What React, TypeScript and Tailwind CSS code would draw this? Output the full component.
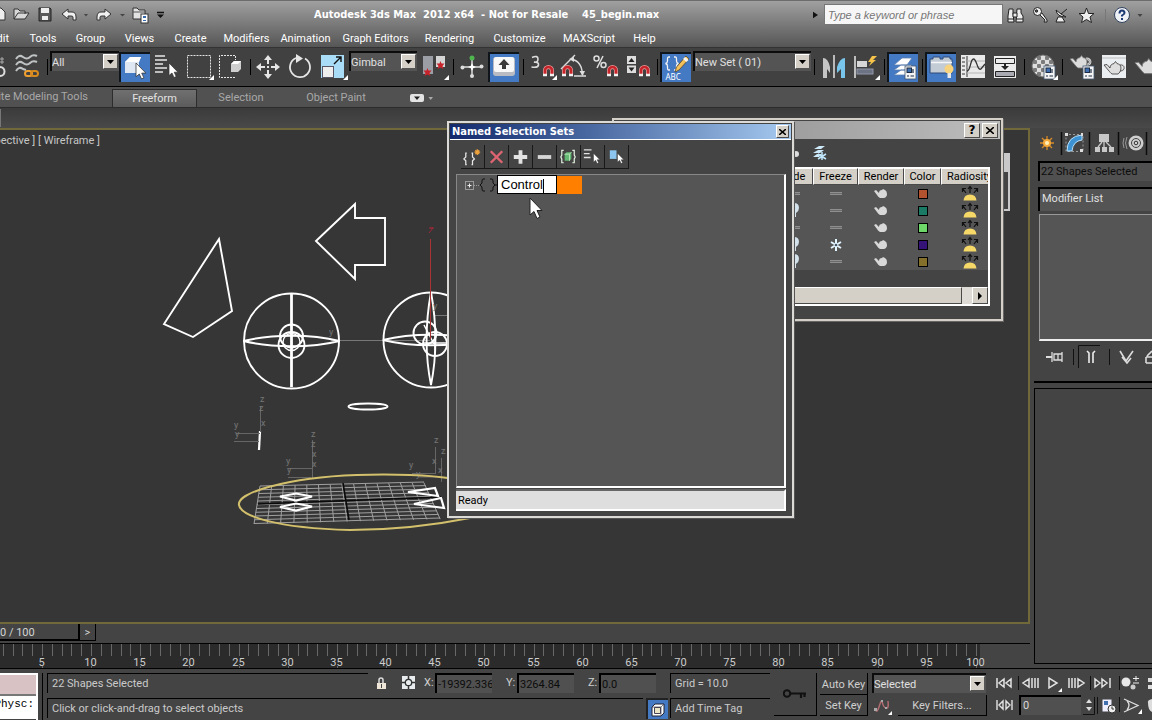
import type { ReactNode } from "react";

const W = "#e6e6e6";

function Icon({ children, className = "size-8" }: { children: ReactNode; className?: string }) {
  return (
    <svg viewBox="0 0 32 32" className={`block shrink-0 ${className}`} fill="none" aria-hidden="true">
      {children}
    </svg>
  );
}

function Tool({ label, active, children }: { label: string; active?: boolean; children: ReactNode }) {
  return (
    <button aria-label={label} className="size-8 shrink-0">
      <Icon>
        {active && (
          <>
            <rect x="0" y="1" width="31" height="30" fill="#10151c" />
            <rect x="2" y="3" width="29" height="28" fill="#4479c4" />
          </>
        )}
        {children}
      </Icon>
    </button>
  );
}

function Sep() {
  return (
    <span className="flex h-8 w-[6px] shrink-0 items-center justify-center">
      <span className="h-4 w-px bg-black" />
    </span>
  );
}

function Combo({ label, value, className }: { label: string; value: string; className: string }) {
  return (
    <div className={`flex h-5 shrink-0 border-t-2 border-l-2 border-[#0c0c0c] bg-[#545454] pt-px pr-px ${className}`}>
      <select aria-label={label} className="h-[17px] min-w-0 flex-1 appearance-none bg-transparent text-[11px] leading-[17px] text-[#e0e0e0] outline-none">
        <option>{value}</option>
      </select>
      <span className="pointer-events-none flex h-[15px] w-[15px] items-center justify-center border border-t-white border-r-[#555] border-b-[#555] border-l-white bg-[#d4d0c8]">
        <svg viewBox="0 0 7 4" className="h-1 w-[7px]">
          <path d="M0 0H7L3.5 4Z" fill="#000" />
        </svg>
      </span>
    </div>
  );
}

const Flyout = () => <path d="M31 24V29H26Z" fill="#fff" />;

const Magnet = ({ x = 0, y = 0 }: { x?: number; y?: number }) => (
  <g transform={`translate(${x} ${y})`}>
    <path d="M2 11V5.500A3.500 3.500 0 0 1 9 5.500V11" stroke="#e3a0a0" strokeWidth="4" />
    <path d="M2 9V5.500A3.500 3.500 0 0 1 9 5.500V9" stroke="#c8262b" strokeWidth="2.600" />
    <path d="M0 10H4M7 10H11" stroke="#f2f2f2" strokeWidth="2.500" />
  </g>
);

const Card = ({ x, y }: { x: number; y: number }) => (
  <g transform={`translate(${x} ${y})`}>
    <rect width="11" height="13" fill="#f4f4f4" stroke="#44576f" strokeWidth=".8" />
    <rect x="2" y="2" width="4.500" height="4.500" fill="#3f6fae" stroke="#1c2c45" />
    <path d="M8 3V7M2 10H4M5.500 10H9" stroke="#1c2c45" strokeWidth="1.200" />
  </g>
);

const Teapot = ({ x = 0, y = 0, s = 1, fill = "#dcdcdc", stroke = "#777" }: { x?: number; y?: number; s?: number; fill?: string; stroke?: string }) => (
  <g transform={`translate(${x} ${y}) scale(${s})`}>
    <path d="M16 4C21 3 22 10 16 10" stroke={fill} strokeWidth="2.600" />
    <path d="M16 4C21 3 22 10 16 10" stroke={stroke} strokeWidth=".7" />
    <path d="M0 4L3 3.500 6 7C6 4 8 3 10 2.600L11.500 .5 13 2.600C15 3 17 4 17 7C17 10 15 12.500 14 13H8C6.500 12 6 11 5 10Z" fill={fill} stroke={stroke} strokeWidth=".8" />
  </g>
);

const Pointer = ({ x, y, s = 1 }: { x: number; y: number; s?: number }) => (
  <path transform={`translate(${x} ${y}) scale(${s})`} d="M0 0V12.500L3 10 5 14.500 7.200 13.500 5.200 9.200H9Z" fill="#fff" stroke="#333" strokeWidth=".7" />
);

const menus = [
  ["Tools", "w-[46px]"],
  ["Group", "w-[49px]"],
  ["Views", "w-[49px]"],
  ["Create", "w-[53px]"],
  ["Modifiers", "w-[59px]"],
  ["Animation", "w-[59px]"],
  ["Graph Editors", "w-[81px]"],
  ["Rendering", "w-[67px]"],
  ["Customize", "w-[73px]"],
  ["MAXScript", "w-[66px]"],
  ["Help", "w-[45px]"],
];

function Header() {
  return (
    <header className="h-[47px] shrink-0 bg-linear-to-b from-[#a2a2a2] to-[#565656]">
      <div className="flex h-7 items-center border-t border-[#6c6c6c]">
        <svg viewBox="0 0 170 26" className="h-[26px] w-[170px] shrink-0" fill="none" aria-hidden="true">
          <path d="M-4 6H1L5 10V18H-4Z" fill="#eee" stroke="#333" />
          <path d="M14 17V7H18L20 9H25V12M14 17L18 11H29L25 17Z" fill="#d8d8d8" stroke="#333" />
          <path d="M39 6H50L51 7V19H39Z" fill="#5a5a5a" stroke="#222" />
          <rect x="41" y="6" width="8" height="5" fill="#eee" />
          <rect x="42" y="14" width="6" height="4" fill="#eee" />
          <path d="M62 12L68 7V10H72Q76 10 76 15V18H73V15Q73 14 71 14H68V17Z" fill="#f0f0f0" stroke="#333" />
          <path d="M84 12H88L86 14.500Z" fill="#444" />
          <path d="M111 12L105 7V10H101Q97 10 97 15V18H100V15Q100 14 102 14H105V17Z" fill="#f0f0f0" stroke="#333" />
          <path d="M120 12H125L122.500 14.500Z" fill="#444" />
          <path d="M133 6H137L139 8H145V17H133Z" fill="#e2e2e2" stroke="#333" />
          <path d="M133 10H145" stroke="#555" />
          <rect x="141" y="12" width="7" height="9" fill="#fff" stroke="#333" />
          <rect x="143" y="14" width="3" height="2" fill="#3769ad" />
          <path d="M143 18.500H146" stroke="#3769ad" />
          <path d="M157 10.500H164" stroke="#111" strokeWidth="1.500" />
          <path d="M157 12.500H164L160.500 16Z" fill="#111" />
        </svg>
        <h1 className="flex-1 pl-[144px] font-[DejaVu_Sans_Condensed,Noto_Sans,sans-serif] text-[11px] leading-4 font-bold whitespace-pre text-white">
          {"Autodesk 3ds Max  2012 x64  - Not for Resale    45_begin.max"}
        </h1>
        <svg viewBox="0 0 6 8" className="mr-[6px] h-2 w-[5px]" aria-hidden="true">
          <path d="M0 0V8L6 4Z" fill="#111" />
        </svg>
        <input
          aria-label="Search"
          placeholder="Type a keyword or phrase"
          className="h-[21px] w-[179px] border border-[#777] bg-[#f6f6f6] px-[3px] font-[Liberation_Sans,sans-serif] text-[11px] italic outline-none placeholder:text-[#777]"
        />
        <svg viewBox="0 0 149 26" className="h-[26px] w-[149px] shrink-0" fill="none" aria-hidden="true">
          <g fill="#eee" stroke="#222">
            <path d="M6 7H10V11L11 20H5V14ZM14 7H18V11L20 14V20H13Z" />
            <path d="M10 11H14V15H10Z" />
            <path d="M5 17H11M13 17H20" />
            <path d="M36 12L42 18 41 20 44 20 44 18 39 11Z" />
            <circle cx="34.500" cy="9.500" r="4" />
            <circle cx="33.500" cy="9" r="1.200" fill="#555" />
            <path d="M53 8Q54 15 63 15L58 12ZM58 12L64 7M55 15L53 20H62L59 15Z" />
            <path d="M83.500 6L85.500 11.500H91L87 15 88.500 20.500 83.500 17.500 78.500 20.500 80 15 76 11.500H81.500Z" />
          </g>
          <path d="M102.500 7V20" stroke="#777" />
          <circle cx="119" cy="13" r="7.500" fill="#eef1f6" stroke="#33445f" />
          <path d="M116.500 11.500Q116.500 8.500 119 8.500T121.500 11Q121.500 12 119 13.500V14.500" stroke="#1d3a75" strokeWidth="2" />
          <rect x="118" y="16" width="2" height="2" fill="#1d3a75" />
          <path d="M134.500 12H139.500L137 15Z" fill="#444" />
        </svg>
      </div>
      <nav className="flex h-5 items-center pt-px text-[11px] leading-4 text-white">
        <button className="flex w-5 justify-end pr-[11px]">Edit</button>
        {menus.map(([name, width]) => (
          <button key={name} className={`flex shrink-0 justify-center whitespace-nowrap ${width}`}>
            {name}
          </button>
        ))}
      </nav>
    </header>
  );
}

const checks: number[][] = [];
for (let r = 0; r < 5; r++) for (let c = 0; c < 5; c++) if ((r + c) % 2) checks.push([5 + c * 4, 4 + r * 4]);

function Toolbar() {
  return (
    <div role="toolbar" className="flex h-10 shrink-0 items-start overflow-hidden border-t border-b border-t-[#333] border-b-black bg-[#414141] pt-[3px]">
      <button aria-label="Unlink Selection" className="h-8 w-3 shrink-0">
        <svg viewBox="0 0 12 32" className="h-8 w-3" fill="none">
          <path d="M0 8H4M0 11H4M2 6V13" stroke="#aaa" />
          <path d="M0 16C6 16 6 25 0 25" stroke="#ddd" strokeWidth="2" />
        </svg>
      </button>
      <Tool label="Bind to Space Warp">
        <g stroke="#bfc3c4" strokeWidth="2">
          <path d="M4 8Q7 3 11 6T18 6T25 5" />
          <path d="M4 14Q7 9 11 12T18 12T25 11" />
          <path d="M4 20Q7 15 11 18L14 19" />
        </g>
        <rect x="13" y="20" width="7" height="5" rx="2.500" stroke="#f0a030" strokeWidth="2" />
        <rect x="19" y="20" width="7" height="5" rx="2.500" stroke="#d98b1e" strokeWidth="2" />
      </Tool>
      <Sep />
      <Combo label="Selection Filter" value="All" className="w-[69px]" />
      <Tool label="Select Object" active>
        <path d="M6 11L11 6H22L20 11V22H6Z" fill="#dfe8f2" />
        <path d="M6 11L11 6H22L20 11Z" fill="#fff" />
        <Pointer x={17} y={12} s={1.1} />
      </Tool>
      <Tool label="Select by Name">
        <path d="M4 5H14M4 9H16M4 13H12M4 17H16M4 21H12" stroke="#e6e6e6" strokeWidth="1.600" />
        <Pointer x={18} y={12} />
      </Tool>
      <Tool label="Rectangular Selection Region">
        <rect x="4.500" y="4.500" width="23" height="22" stroke={W} strokeDasharray="2 1" />
        <Flyout />
      </Tool>
      <Tool label="Window/Crossing">
        <path d="M20 26.500H4.500V4.500H20.500V9" stroke={W} strokeDasharray="2 1" />
        <path d="M16 13L19 10H26V18L23 21H16Z" fill="#cfcfcf" />
        <path d="M16 13L19 10H26L23 13Z" fill="#fff" />
      </Tool>
      <Sep />
      <Tool label="Select and Move">
        <path d="M15 4L19 9H11ZM15 28L19 23H11ZM3 16L8 12V20ZM27 16L22 12V20Z" fill={W} />
        <path d="M15 8V13M15 19V24M7 16H12M18 16H23M14 16H16" stroke={W} strokeWidth="2" />
      </Tool>
      <Tool label="Select and Rotate">
        <path d="M11 7A10 10 0 1 0 20 7.500" stroke={W} strokeWidth="1.800" />
        <path d="M11 3L18 7.500 11 12Z" fill={W} />
      </Tool>
      <Tool label="Select and Scale">
        <rect x="4" y="4" width="23" height="23" fill="#a9dcf6" />
        <rect x="5.500" y="15.500" width="11" height="11" fill="#eee" stroke="#556" />
        <path d="M17 13L24 6M19 6H24V11" stroke="#111" strokeWidth="1.400" />
        <Flyout />
      </Tool>
      <Combo label="Reference Coordinate System" value="Gimbal" className="mr-px w-[68px]" />
      <Tool label="Use Pivot Point Center">
        <path d="M5 5H15V23H5Z" fill="#9b9ea4" />
        <path d="M18 5H27V16H18Z" fill="#d5d5d5" />
        <path d="M9.500 17L10.500 19.500H13.500L11.500 22 12.500 25 9.500 23.500 6.500 25 7.500 22 5.500 19.500H8.500ZM22.500 10L23.500 12.500H26.500L24.500 15 25.500 18 22.500 16.500 19.500 18 20.500 15 18.500 12.500H21.500Z" fill="#c8232a" />
        <Flyout />
      </Tool>
      <Sep />
      <Tool label="Select and Manipulate">
        <path d="M16 8V25M7 16H25" stroke="#ddd" strokeWidth="1.500" />
        <path d="M16 12L17.200 14.800 20 16 17.200 17.200 16 20 14.800 17.200 12 16 14.800 14.800Z" fill="#fff" />
        <circle cx="16" cy="7" r="2.500" fill="#4fb54f" />
        <circle cx="16" cy="25" r="2" fill="#ddd" />
        <circle cx="6.500" cy="16.500" r="2" fill="#ddd" />
        <circle cx="25.500" cy="15.500" r="2" fill="#ddd" />
      </Tool>
      <Tool label="Keyboard Shortcut Override Toggle" active>
        <rect x="5" y="6" width="22" height="19" rx="3" fill="#b8bcc2" />
        <rect x="6" y="6" width="20" height="15" rx="2" fill="#f8f8f8" />
        <path d="M16 8L21.500 14H18V18H14V14H10.500Z" fill="#3a3a3a" />
      </Tool>
      <Sep />
      <Tool label="Snaps Toggle">
        <path d="M6 6.500Q12 4 12 8T8 11Q13 11 12.500 14T5.500 16" stroke="#ddd" strokeWidth="1.600" />
        <Magnet x={17} y={14} />
        <Flyout />
      </Tool>
      <Tool label="Angle Snap Toggle">
        <path d="M3 18L17 4M16 25H28M13 8Q24 10 24.500 24" stroke="#ddd" strokeWidth="1.400" />
        <path d="M11 8L16 6V11ZM21.500 20H27L24.500 25Z" fill="#ddd" />
        <Magnet x={4} y={14} />
      </Tool>
      <Tool label="Percent Snap Toggle">
        <circle cx="6.500" cy="7.500" r="2.500" stroke="#ddd" strokeWidth="1.500" />
        <circle cx="13.500" cy="14" r="2.500" stroke="#ddd" strokeWidth="1.500" />
        <path d="M13 5L7 17" stroke="#ddd" strokeWidth="1.500" />
        <Magnet x={17} y={14} />
      </Tool>
      <Tool label="Spinner Snap Toggle">
        <path d="M5 5H14V13H5ZM5 14.500H14V22H5Z" fill="#ddd" />
        <path d="M9.500 7L12.500 11H6.500ZM9.500 20.500L12.500 16.500H6.500Z" fill="#222" />
        <Magnet x={17} y={14} />
      </Tool>
      <Sep />
      <Tool label="Edit Named Selection Sets" active>
        <path d="M10 6H8.500Q7.500 6 7.500 8V10Q7.500 12 5.500 12.500Q7.500 13 7.500 15V17Q7.500 19 8.500 19H10M14 6H15.500Q16.500 6 16.500 8V10Q16.500 12 18.500 12.500Q16.500 13 16.500 15V17Q16.500 19 15.500 19H14" stroke="#f4f4f4" strokeWidth="1.300" />
        <path d="M26 5L29 8 19 19 15 21 16.500 16Z" fill="#f3c15c" stroke="#4b3b20" strokeWidth=".7" />
        <path d="M25 6L28.500 9 26.500 11 23 8Z" fill="#f4f4f4" />
        <text x="5.500" y="29" fontSize="8" fill="#fff" fontFamily="Noto Sans, sans-serif">ABC</text>
      </Tool>
      <Combo label="Named Selection Sets" value="New Set ( 01)" className="ml-px w-[118px]" />
      <Sep />
      <Tool label="Mirror">
        <path d="M6 27V7Q11 7 13 16V22L10 18V27Z" fill="#c5c5c5" />
        <path d="M17 4V27" stroke="#eee" strokeWidth="1.400" />
        <path d="M28 27V7Q23 7 20 16V22L24 18V27Z" fill="#78c4ea" />
      </Tool>
      <Tool label="Align">
        <path d="M6 5V27" stroke="#ddd" strokeWidth="1.600" />
        <rect x="8" y="10" width="10" height="6" fill="#d7d7d7" />
        <rect x="8" y="18" width="16" height="5" fill="#6c7383" stroke="#9298a8" />
        <path d="M23 5L19 11H22L20 15 27 9H24L28 5Z" fill="#f5c24a" />
        <Flyout />
      </Tool>
      <Sep />
      <Tool label="Layer Manager" active>
        <path d="M7 24L14 19H25L20 24ZM7 19L14 14H25L20 19ZM7 14L15 7H25L20 14Z" fill="#fff" stroke="#5a7fae" strokeWidth=".8" />
        <Card x={18} y={15} />
      </Tool>
      <Sep />
      <Tool label="Graphite Modeling Ribbon" active>
        <path d="M5 8H8V6H15V8H18V6H25V8H27V22H5Z" fill="#c3cbd5" stroke="#2c4a78" />
        <path d="M6 11.500H27" stroke="#f4f6fa" strokeWidth="1.500" />
        <circle cx="24" cy="18" r="4.500" fill="#f7d37d" />
        <path d="M22.500 22H26V27H22.500Z" fill="#e8e8e8" />
      </Tool>
      <Tool label="Curve Editor">
        <rect x="4" y="4" width="24" height="23" fill="#e9e9e9" />
        <path d="M10 5V26" stroke="#333" />
        <path d="M10 10H28M10 16H28M10 22H28" stroke="#b5b5b5" />
        <path d="M5 7H8M5 11H8M5 15H8M5 19H8M5 23H8" stroke="#333" />
        <path d="M10 20C14 20 13 8 16.500 8S20 20 24 18L28 13" stroke="#333" strokeWidth="1.300" />
      </Tool>
      <Tool label="Schematic View">
        <rect x="5" y="5" width="22" height="22" fill="#ececec" />
        <path d="M6.500 7.500H25.500V12.500H6.500Z" stroke="#222" />
        <path d="M6.500 20.500H25.500V25.500H6.500Z" fill="#a9aab2" stroke="#222" />
        <path d="M16 12V16" stroke="#222" strokeWidth="2" />
        <path d="M12 15H20L16 19Z" fill="#222" />
      </Tool>
      <Sep />
      <Tool label="Material Editor">
        <circle cx="16" cy="15" r="11" fill="#dedede" />
        <g fill="#7b7b7b">
          {checks.map(([x, y]) => (
            <rect key={`${x}-${y}`} x={x + 1} y={y + 1} width="4" height="4" rx="1" />
          ))}
        </g>
        <circle cx="16" cy="15" r="11" stroke="#6c6c6c" />
        <Card x={17} y={15} />
        <Flyout />
      </Tool>
      <Sep />
      <Tool label="Render Setup">
        <Teapot x={5} y={4} />
        <Card x={18} y={15} />
      </Tool>
      <Tool label="Rendered Frame Window">
        <rect x="5" y="4" width="24" height="23" fill="#eceff1" />
        <path d="M5 7H29" stroke="#bbb" />
        <Teapot x={7} y={10} fill="#dedede" stroke="#333" />
      </Tool>
      <Tool label="Render Production">
        <Teapot x={6} y={7} s={1.2} />
      </Tool>
    </div>
  );
}

function Ribbon() {
  return (
    <div className="shrink-0">
      <div className="flex h-[21px] items-end border-b border-[#2c2c2c] bg-[#515151] text-[11px] leading-4 text-[#a8a8a8]">
        <button className="flex h-[18px] w-28 shrink-0 justify-end overflow-hidden pr-6 whitespace-nowrap">Graphite Modeling Tools</button>
        <button className="h-[18px] w-[85px] border border-b-0 border-[#2c2c2c] bg-linear-to-b from-[#707070] to-[#5c5c5c] leading-[14px] text-[#e2e2e2]">Freeform</button>
        <button className="h-[18px] w-[88px]">Selection</button>
        <button className="h-[18px] w-[102px]">Object Paint</button>
        <button aria-label="Ribbon options" className="flex h-[18px] items-center pl-[23px]">
          <svg viewBox="0 0 24 8" className="h-2 w-6">
            <rect width="14" height="8" rx="2" fill="#e4e4e4" />
            <path d="M4 2.500H10L7 6Z" fill="#222" />
            <path d="M18.500 3H23L20.700 6Z" fill="#aaa" />
          </svg>
        </button>
      </div>
      <div className="flex h-5 bg-linear-to-b from-[#3b3b3b] to-[#494949]">
        <span className="mt-px h-[18px] w-px bg-[#777]" />
      </div>
    </div>
  );
}

const glyphs: [number, number, string][] = [
  [260, 402, "z"], [259, 411, "z"], [261, 426, "x"], [234, 428, "y"], [235, 437, "y"],
  [311, 437, "z"], [311, 447, "z"], [312, 457, "x"], [312, 467, "x"], [286, 464, "y"], [287, 473, "y"],
  [434, 443, "z"], [441, 454, "z"], [432, 464, "x"], [438, 473, "x"], [409, 468, "y"], [416, 477, "y"],
  [329, 335, "y"], [433, 309, "y"],
];

function Wheel({ cx, cy }: { cx: number; cy: number }) {
  return (
    <g>
      <circle cx={cx} cy={cy} r="47.500" />
      <path d={`M${cx - 48} ${cy}C${cx - 20} ${cy - 7} ${cx + 20} ${cy - 7} ${cx + 48} ${cy}C${cx + 20} ${cy + 7} ${cx - 20} ${cy + 7} ${cx - 48} ${cy}Z`} />
    </g>
  );
}

function Viewport() {
  const cols = Array.from({ length: 15 }, (_, i) => i);
  const rows = Array.from({ length: 11 }, (_, i) => i);
  return (
    <main className="relative min-h-0 flex-1 overflow-hidden border-t-2 border-r-2 border-b-2 border-[#71693a] bg-[#363636]">
      <svg className="absolute inset-0 h-full w-full" fill="none" aria-hidden="true">
        <g transform="translate(0 -130)">
          <path d="M331 340.500H430M434 315.500H450" stroke="#777" />
          <g stroke="#fff" strokeWidth="1.900">
            <path d="M219 239L164 324 193 337 232 311Z" />
            <path d="M316 241L355 204V218H385V265H355V279Z" />
            <Wheel cx={291.5} cy={341} />
            <path d="M291.500 293V387" strokeWidth="2.800" />
            <circle cx="291.500" cy="336" r="11.500" />
            <circle cx="291.500" cy="345" r="13" />
            <circle cx="291.500" cy="342" r="8.500" strokeWidth="1.400" />
            <Wheel cx={431} cy={340} />
            <path d="M431 292C425 325 425 355 431 385C437 355 437 325 431 292" />
            <circle cx="425" cy="333" r="11.500" />
            <circle cx="435" cy="344" r="12" />
            <path d="M424 325L434 344M435 332V356M424 343H446" strokeWidth="1.500" />
            <ellipse cx="368" cy="406.500" rx="19.500" ry="3" />
            <path d="M260 431L259 450" strokeWidth="2.200" />
          </g>
          <path d="M430.500 239V339" stroke="#a83234" />
          <path d="M429 228H433L429 233M434 228H430" stroke="#a02838" />
          <g stroke="#666">
            <path d="M236 433.500H260M234 441.500H259M260.500 406V432M288 468.500H312M288 477.500H311M312.500 440V478M412 473.500H436M418 477H441M435.500 447V473M441.500 458V482" />
          </g>
          <g fill="#777" fontSize="9">
            {glyphs.map(([x, y, t]) => (
              <text key={`${x}-${y}`} x={x} y={y}>{t}</text>
            ))}
          </g>
          <g stroke="#a0a0a0">
            {cols.map((i) => (
              <path key={i} d={`M${260 + i * 11.700} ${486 - i * 0.250}L${254 + i * 13.300} ${524 - i * 0.350}`} />
            ))}
            {rows.map((i) => (
              <path key={i} d={`M${260 - i * 0.600} ${486 + i * 3.750}L${424 + i * 1.600} ${482 + i * 3.600}`} />
            ))}
          </g>
          <path d="M258 504L442 497M343 483L349 520" stroke="#0a0a0a" strokeWidth="1.600" />
          <g stroke="#fff" strokeWidth="2.200">
            <path d="M280 496.500L296 493.500 312 496.500 296 500.500ZM280 507L296 503.500 312 506.500 296 510.500Z" />
            <path d="M408 492L435 488 438 496ZM414 504L441 498 444 508Z" />
          </g>
          <path d="M470 482C430 472 340 472 290 482C245 491 238 500 239 505C241 516 275 528 350 530C400 530 435 525 470 518" stroke="#d3c06c" strokeWidth="2" />
        </g>
      </svg>
      <div className="relative flex w-[100px] justify-end overflow-hidden pt-[3px] text-[11px] leading-4 whitespace-nowrap text-[#c6c6c6]">[ Perspective ] [ Wireframe ]</div>
    </main>
  );
}

function TimeTrack() {
  const frames = Array.from({ length: 100 }, (_, i) => i + 1);
  const at = (f: number) => Math.round(42 + (f - 5) * 9.830) + 0.5;
  return (
    <div className="shrink-0">
      <div className="flex h-[19px] bg-[#444] text-[11px] leading-4 text-[#d4d4d4]">
        <button className="h-[17px] w-20 border-r-2 border-b-2 border-black pt-px text-left">0 / 100</button>
        <button className="h-[17px] w-4 border-r border-b border-black pt-px">&gt;</button>
      </div>
      <svg className="block h-[25px] w-full border-t border-black" fill="none" aria-label="Track bar">
        <rect width="980" height="25" fill="#2b2b2b" />
        {frames.map((f) => (
          <path key={f} d={`M${at(f)} 0V12${f % 5 ? "" : "M" + at(f) + " 22V25"}`} stroke="#686868" />
        ))}
        <g fill="#cdcdcd" fontSize="11" textAnchor="middle">
          {frames.filter((f) => f % 5 === 0).map((f) => (
            <text key={f} x={at(f) - 1} y="22">{f}</text>
          ))}
        </g>
      </svg>
    </div>
  );
}

function CommandPanel() {
  return (
    <aside className="flex w-[122px] shrink-0 flex-col overflow-hidden bg-[#444] pl-1">
      <div className="flex h-8 items-start">
        <svg viewBox="0 1 118 32" className="h-8 w-[118px] shrink-0" fill="none" aria-hidden="true">
          <path d="M27.500 5V28M55.500 5V28M84.500 5V28M112.500 5V28" stroke="#0c0c0c" strokeWidth="1.500" />
          <path d="M13 9V23M6 16H20M8 11L18 21M18 11L8 21" stroke="#d88a28" strokeWidth="1.300" />
          <circle cx="13" cy="16" r="4" fill="#f6a93a" />
          <circle cx="13" cy="16" r="2" fill="#fff0b8" />
          <path d="M32 24.500V7.500H49V24.500H32" stroke="#999" strokeDasharray="2 2" />
          <path d="M33 24Q33 9 48 8V13Q39 14 38 24Z" fill="#3d92d4" stroke="#b9e0f8" />
          <path d="M31 6H34V9H31ZM47 6H49V9H47ZM46 22H49V25H46Z" fill="#ddd" />
          <path d="M65 7H75V15H65ZM61 20H66V25H61ZM68 20H73V25H68ZM75 20H80V25H75Z" fill="#c8c8c8" />
          <path d="M70 15V20M68 15L64 20M72 15L77 20" stroke="#c8c8c8" strokeWidth="1.300" />
          <circle cx="102" cy="16" r="7.500" fill="#cfcfcf" />
          <circle cx="102" cy="16" r="4.500" stroke="#444" />
          <circle cx="102" cy="16" r="1.800" stroke="#333" />
          <path d="M93 10Q90 16 93 22M90 11Q88 16 90 21" stroke="#999" />
        </svg>
      </div>
      <input aria-label="Object name" defaultValue="22 Shapes Selected" className="mt-px ml-1 h-[20px] border-t-2 border-l-2 border-black bg-[#505050] px-px pb-[2px] text-[11px] text-[#0c0c0c] outline-none" />
      <select aria-label="Modifier List" className="mt-[6px] ml-1 h-6 appearance-none border-t-2 border-l-2 border-black bg-[#545454] px-[2px] pb-[2px] text-[11px] text-[#e0e0e0] outline-none">
        <option>Modifier List</option>
      </select>
      <div className="mt-[3px] ml-[5px] h-[127px] shrink-0 border-t border-b-2 border-l border-t-[#999] border-b-[#eee] border-l-[#999] bg-[#555]" />
      <svg viewBox="0 0 118 40" className="h-10 w-[118px] shrink-0" fill="none" aria-hidden="true">
        <path d="M39.500 8V24M75.500 8V24" stroke="#111" />
        <path d="M44.500 27V4.500H66" stroke="#111" />
        <path d="M12 16H18" stroke="#ddd" strokeWidth="2" />
        <path d="M18 11V21M20 13H28V19H20ZM24 13V19M28 11V21" stroke="#ddd" strokeWidth="1.300" />
        <path d="M53 10L55 12V22M61 10L59 12V22" stroke="#eee" strokeWidth="1.600" />
        <path d="M86 10L92 20L99 10M88 16L93 22 97 17" stroke="#ddd" strokeWidth="1.600" />
        <path d="M112 16H118M112 22H118M113 15L118 10M112 16V22" stroke="#ddd" strokeWidth="1.600" />
      </svg>
      <div className="h-[7px] shrink-0 border-t-2 border-black" />
      <div className="min-h-0 flex-1 border-t border-b border-l border-black bg-[#444]" />
      <div className="h-1 shrink-0" />
    </aside>
  );
}

function Coord({ axis, value }: { axis: string; value: string }) {
  return (
    <label className="flex items-center text-[11px] text-[#cfcfcf]">
      <span className="w-[11px]">{axis}:</span>
      <input defaultValue={value} className="h-5 w-[57px] border-t-2 border-l-2 border-black bg-[#505050] pl-px text-[#0c0c0c] outline-none" />
    </label>
  );
}

function StatusBar() {
  const field = "flex h-5 items-center border-t border-l border-black pt-px text-[11px] leading-4 text-[#cacaca]";
  return (
    <footer className="flex h-[52px] shrink-0 overflow-hidden border-t border-black bg-[#444] pt-1">
      <div className="w-[38px] shrink-0 border-r-2 border-white">
        <div className="h-[23px] border-t-2 border-b-2 border-t-white border-b-[#777] bg-[#d8c2c4]" />
        <div className="flex h-[23px] justify-end overflow-hidden border-b-2 border-white bg-white pr-[2px] font-[Liberation_Mono,monospace] text-[11px] leading-[17px] text-black">Physc:</div>
      </div>
      <div className="mx-1 h-full w-px shrink-0 bg-black" />
      <div className="flex min-w-0 flex-1 flex-col gap-[5px] pr-[2px]">
        <div className="flex h-5 items-center">
          <div className={`min-w-0 flex-1 pl-1 ${field}`}>22 Shapes Selected</div>
          <svg viewBox="0 0 56 20" className="h-5 w-14 shrink-0" fill="none" aria-hidden="true">
            <path d="M11 10V7Q11 5 13 5T15 7V10" stroke="#ddd" strokeWidth="1.500" />
            <rect x="9" y="10" width="9" height="6" fill="#efe6d8" />
            <path d="M13.500 11V15" stroke="#444" />
            <rect x="34" y="3" width="13" height="13" fill="#e8ecee" />
            <circle cx="40.500" cy="9.500" r="3.200" stroke="#333" strokeWidth="1.300" />
            <path d="M40.500 3V6M40.500 13V16M34 9.500H37M44 9.500H47" stroke="#333" strokeWidth="1.500" />
          </svg>
          <div className="flex gap-[14px] pr-3">
            <Coord axis="X" value="-19392.336" />
            <Coord axis="Y" value="3264.84" />
            <Coord axis="Z" value="0.0" />
          </div>
        </div>
        <div className="flex h-[21px]">
          <div className={`min-w-0 flex-1 pl-1 ${field}`}>Click or click-and-drag to select objects</div>
          <button aria-label="Isolate" className="ml-[3px] flex h-[21px] w-[22px] items-center justify-center border-t-2 border-l-2 border-[#222] bg-[#4479c4]">
            <svg viewBox="0 0 14 14" className="size-[14px]" fill="none">
              <path d="M1 4L4 1H13V10L10 13H1Z" fill="#fff" stroke="#223" />
              <path d="M3.500 4.500H9.500V10.500H3.500Z" fill="#ece5c5" stroke="#445" />
              <path d="M9.500 4.500L13 1M10 13V4H1" stroke="#445" strokeWidth=".7" />
            </svg>
          </button>
        </div>
      </div>
      <div className="flex w-[104px] shrink-0 flex-col gap-[5px] pr-1">
        <div className={`pl-1 ${field}`}>Grid = 10.0</div>
        <button className={`pl-1 ${field}`}>Add Time Tag</button>
      </div>
      <button aria-label="Set Keys" className="flex h-[43px] w-[43px] shrink-0 items-center justify-center border-r border-b border-black">
        <svg viewBox="0 0 24 12" className="h-3 w-6" fill="none">
          <circle cx="4" cy="5.500" r="3.300" stroke="#111" strokeWidth="2" />
          <path d="M7 5.500H23M18 6V10M21.500 6V9" stroke="#111" strokeWidth="2.200" />
        </svg>
      </button>
      <div className="ml-[3px] flex w-[48px] shrink-0 flex-col text-[11px] leading-4 whitespace-nowrap text-[#cfcfcf]">
        <button className="flex h-[22px] items-center justify-center border-r border-b border-black pt-[2px]">Auto Key</button>
        <button className="flex h-[21px] items-center justify-center border-r border-b border-black pt-[2px]">Set Key</button>
      </div>
      <div className="ml-1 flex w-[115px] shrink-0 flex-col">
        <Combo label="Key mode" value="Selected" className="w-[114px]" />
        <div className="flex h-[23px] pt-[2px]">
          <svg viewBox="0 0 26 21" className="h-[21px] w-[26px] shrink-0" fill="none" aria-hidden="true">
            <path d="M3 14Q5 19 7 12T10 6Q11 12 14 13T16 6" stroke="#b06c70" strokeWidth="1.500" />
            <path d="M2 13H5V16H2ZM9 5H11V7H9ZM13 12H15V14H13Z" fill="#aaa" />
            <path d="M20 16V20H16Z" fill="#fff" />
          </svg>
          <button className="flex-1 border-r border-b border-black pt-[2px] text-[11px] leading-4 text-[#cfcfcf]">Key Filters...</button>
        </div>
      </div>
      <div className="w-[165px] shrink-0">
        <svg viewBox="0 0 165 21" className="block h-[21px] w-[165px]" fill="none" aria-hidden="true">
          <path d="M31.500 3V17M103.500 3V17M132.500 3V17" stroke="#111" />
          <g stroke="#e2e2e2" strokeWidth="1.500">
            <path d="M10 5V15M17 6V14L12 10ZM24 6V14L19 10Z" />
            <path d="M42 6V14L36 10ZM45 5V15M48 5V15M51 5V15" />
            <path d="M62 5V15L70 10Z" />
            <path d="M82 5V15M85 5V15M88 5V15M91 6V14L97 10Z" />
            <path d="M108 6V14L113 10ZM115 6V14L120 10ZM123 5V15" />
          </g>
          <path d="M75 15V19H71Z" fill="#fff" />
          <circle cx="139" cy="9" r="4.500" fill="#e8e8e8" />
          <circle cx="146" cy="14" r="2.500" fill="#ccc" />
          <path d="M146 5.500H152M149 3V8M146 10H152" stroke="#eee" />
          <path d="M161 5H165V9H161ZM161 12H165V16H161Z" fill="#ddd" />
        </svg>
        <div className="flex h-[22px] items-center">
          <svg viewBox="0 0 32 20" className="h-5 w-8 shrink-0" fill="none" aria-hidden="true">
            <path d="M10 5V15M16 6V14L12 10ZM19 6V14L23 10ZM25 5V15" stroke="#e2e2e2" strokeWidth="1.400" />
          </svg>
          <input aria-label="Current frame" defaultValue="0" className="h-5 w-[62px] border-t-2 border-l-2 border-black bg-[#505050] px-[2px] pb-px text-[11px] text-[#d8d8d8] outline-none" />
          <svg viewBox="0 0 71 21" className="h-[21px] w-[71px] shrink-0" fill="none" aria-hidden="true">
            <path d="M13.500 2V19.500H2M16.500 2V19M38.500 2V17" stroke="#111" />
            <path d="M8 4L11 8H5ZM8 16L11 12H5Z" fill="#ddd" />
            <rect x="21" y="4" width="10" height="13" fill="#eef" stroke="#444" />
            <rect x="23" y="6" width="4" height="4" fill="#3f6fae" />
            <circle cx="31" cy="14" r="4" fill="#eee" stroke="#333" />
            <path d="M31 11.500V14H33" stroke="#333" />
            <path d="M43 4L57 10.500 43 17M46 6Q50 10 46 15" stroke="#ddd" strokeWidth="1.300" />
            <path d="M61 14V19H57Z" fill="#fff" />
            <path d="M67 8Q66 5 71 4V17Q67 15 67 8Z" fill="#ddd" />
          </svg>
        </div>
      </div>
    </footer>
  );
}

const bevel = "border border-t-white border-r-[#4a4a4a] border-b-[#4a4a4a] border-l-white bg-[#d4d0c8]";

const Dash = () => (
  <svg viewBox="0 0 12 4" className="mx-auto h-1 w-3">
    <rect y="0" width="12" height="3" fill="#8f8f8f" />
    <rect y="1" width="12" height="1" fill="#6b6b6b" />
  </svg>
);

const layerRows: { color: string; hidden: boolean; frozen: boolean }[] = [
  { color: "#b2522e", hidden: false, frozen: false },
  { color: "#1a7a66", hidden: true, frozen: false },
  { color: "#6dd869", hidden: false, frozen: false },
  { color: "#341277", hidden: true, frozen: true },
  { color: "#84702a", hidden: true, frozen: false },
];

function LayerDialog() {
  return (
    <section aria-label="Layers" className="absolute top-[118px] left-[612px] flex h-[203px] w-[391px] flex-col border-2 border-[#d4d0c8] bg-[#444] p-px shadow-[1px_1px_0_#666]">
      <div className="flex h-[18px] shrink-0 items-center justify-end gap-[2px] bg-linear-to-r from-[#858585] to-[#bdbdbd] pr-[2px]">
        <button aria-label="Help" className={`flex h-[15px] w-4 items-center justify-center font-[DejaVu_Sans,sans-serif] text-[12px] leading-3 font-bold text-black ${bevel}`}>?</button>
        <button aria-label="Close" className={`flex h-[15px] w-4 items-center justify-center ${bevel}`}>
          <svg viewBox="0 0 8 7" className="h-[7px] w-2"><path d="M0 0L8 7M8 0L0 7" stroke="#000" strokeWidth="1.600" /></svg>
        </button>
      </div>
      <div className="flex h-7 shrink-0 items-center justify-end pr-[172px]">
        <svg viewBox="0 0 40 20" className="h-5 w-10" fill="none" aria-hidden="true">
          <circle cx="8" cy="11" r="3" fill="#ddd" />
          <path d="M26 6L31 3H37L33 6ZM25 10L30 7H36L32 10ZM25 14L29 11H34L31 14Z" fill="#cdeafa" />
          <path d="M34 9V17M30 11L38 16M38 11L30 16" stroke="#bfe6fa" strokeWidth="1.500" />
        </svg>
      </div>
      <div className="mx-[10px] flex min-h-0 flex-col overflow-hidden border-t border-r-2 border-b-2 border-white">
        <table className="w-[374px] table-fixed border-separate border-spacing-0 text-[11px] leading-[14px]">
          <thead>
            <tr className="text-black">
              <th className={`w-[150px] p-0 pt-px font-normal ${bevel}`} />
              <th className={`w-[38px] p-0 pt-px font-normal ${bevel}`}>Hide</th>
              <th className={`w-[45px] p-0 pt-px font-normal ${bevel}`}>Freeze</th>
              <th className={`w-[46px] p-0 pt-px font-normal ${bevel}`}>Render</th>
              <th className={`w-[37px] p-0 pt-px font-normal ${bevel}`}>Color</th>
              <th className={`w-[58px] p-0 pt-px pl-[5px] text-left font-normal ${bevel}`}>Radiosity</th>
            </tr>
          </thead>
          <tbody className="bg-[#555]">
            {layerRows.map((row) => (
              <tr key={row.color} className="h-[17px]">
                <td className="p-0" />
                <td className="p-0">
                  {row.hidden ? (
                    <svg viewBox="0 0 12 15" className="mx-auto block h-[15px] w-3">
                      <path d="M1 5Q1 0 6 0T11 5Q11 8 8 10V14H4V10Q1 8 1 5Z" fill="#d3e2ea" />
                    </svg>
                  ) : (
                    <Dash />
                  )}
                </td>
                <td className="p-0">
                  {row.frozen ? (
                    <svg viewBox="0 0 12 12" className="mx-auto size-3" fill="none">
                      <path d="M6 0V12M1 3L11 9M11 3L1 9" stroke="#e4f6ff" strokeWidth="2" />
                      <circle cx="6" cy="6" r="1.300" fill="#456" />
                    </svg>
                  ) : (
                    <Dash />
                  )}
                </td>
                <td className="p-0">
                  <svg viewBox="0 0 14 10" className="mx-auto h-[10px] w-[14px]">
                    <path d="M0 2L2 1 5 4Q5 1 8 1L9 0 11 1Q13 2 13 5T10 9H6Q4 8 3 6Z" fill="#d8d8d8" />
                  </svg>
                </td>
                <td className="p-0">
                  <span className="mx-auto block size-[10px] border border-black" style={{ backgroundColor: row.color }} />
                </td>
                <td className="p-0">
                  <svg viewBox="0 0 18 17" className="mx-auto block h-[17px] w-[18px]" fill="none">
                    <path d="M2.500 15.500Q3 9.500 9 9.500T15.500 15.500Z" fill="#f6d868" />
                    <path d="M9 8V2M7 4L9 1.500 11 4M5 8L2 4M1.500 7V3.500H5M13 8L16 4M13 3.500H16.500V7" stroke="#111" strokeWidth="1.200" />
                  </svg>
                </td>
              </tr>
            ))}
          </tbody>
        </table>
        <div className="mt-[17px] flex h-[17px] bg-[#dedbd6]">
          <div className={`min-w-0 flex-1 ${bevel}`} />
          <div className="w-[10px]" />
          <button aria-label="Scroll right" className={`flex w-4 items-center justify-center ${bevel}`}>
            <svg viewBox="0 0 4 8" className="h-2 w-1"><path d="M0 0V8L4 4Z" fill="#000" /></svg>
          </button>
        </div>
      </div>
    </section>
  );
}

const setTools: { label: string; art: ReactNode }[] = [
  { label: "Create New Set", art: <><path d="M6 8H5V12L3 14 5 16V20H6M11 8H12V12L14 14 12 16V20H11" stroke="#e8e8e8" strokeWidth="1.300" /><path d="M17 4V10M14 7H20M15 5L19 9M19 5L15 9" stroke="#f0a23a" strokeWidth="1.300" /></> },
  { label: "Remove", art: <path d="M6 6L18 18M18 6L6 18" stroke="#dd6470" strokeWidth="2.500" /> },
  { label: "Add Selected Objects", art: <path d="M12 5V19M5 12H19" stroke="#e2e2e2" strokeWidth="4" /> },
  { label: "Subtract Selected Objects", art: <path d="M5 12H19" stroke="#d6d6d6" strokeWidth="4" /> },
  { label: "Select Objects in Set", art: <><path d="M7 5H5V10L4 12 5 14V18H7M16 5H18V10L19 12 18 14V18H16" stroke="#dfeedd" strokeWidth="1.300" /><path d="M8 9L10 7H15V14L13 16H8Z" fill="#63b873" /><path d="M8 9H13V16M13 9L15 7" stroke="#b8e6b8" /></> },
  { label: "Select Objects by Name", art: <><path d="M3 4.500H11M3 8.500H9M3 12.500H10" stroke="#e2e2e2" strokeWidth="1.400" /><Pointer x={13} y={8} s={0.75} /></> },
  { label: "Highlight Selected Objects", art: <><path d="M5 5H12V14H5Z" fill="#8cc6ee" /><Pointer x={13} y={8} s={0.75} /></> },
];

function NamedSetsDialog() {
  return (
    <section aria-labelledby="nss-title" className="absolute top-[121px] left-[447px] flex h-[397px] w-[347px] flex-col border-2 border-[#dcdad6] bg-[#444] p-px shadow-[1px_1px_0_#555]">
      <div className="flex h-4 shrink-0 items-center justify-between border-b border-white bg-linear-to-r from-[#14296c] to-[#a6caf0] px-[2px]">
        <h2 id="nss-title" className="font-[DejaVu_Sans_Condensed,Noto_Sans,sans-serif] text-[11px] leading-[14px] font-bold text-white">Named Selection Sets</h2>
        <button aria-label="Close" className={`flex h-[13px] w-[13px] items-center justify-center ${bevel}`}>
          <svg viewBox="0 0 7 6" className="h-[6px] w-[7px]"><path d="M0 0L7 6M7 0L0 6" stroke="#000" strokeWidth="1.500" /></svg>
        </button>
      </div>
      <div className="mt-[5px] ml-[11px] flex h-6 shrink-0">
        {setTools.map((t) => (
          <button key={t.label} aria-label={t.label} className="flex size-6 items-center justify-center border-r border-b border-[#181818]">
            <svg viewBox="0 0 24 24" className="size-6" fill="none">{t.art}</svg>
          </button>
        ))}
      </div>
      <div className="ml-[6px] mr-[5px] mt-[5px] min-h-0 flex-1 border-t border-r-2 border-b-2 border-l border-t-[#888] border-r-white border-b-white border-l-[#888] bg-[#555]">
        <div className="flex h-[19px] items-center pl-2">
          <svg viewBox="0 0 32 19" className="h-[19px] w-8 shrink-0" fill="none" aria-hidden="true">
            <rect x=".5" y="6.500" width="8" height="8" stroke="#999" />
            <path d="M2.500 10.500H6.500M4.500 8.500V12.500" stroke="#eee" />
            <path d="M9 10.500H15" stroke="#999" strokeDasharray="1 1" />
            <path d="M20 4H18Q17 4 17 6V8L15 10 17 12V14Q17 16 18 16H20M25 4H27Q28 4 28 6V8L30 10 28 12V14Q28 16 27 16H25M30 10H32" stroke="#111" />
          </svg>
          <input aria-label="Set name" defaultValue="Control" className="h-[19px] w-[60px] border border-black bg-white px-[3px] font-[Liberation_Sans,sans-serif] text-[13px] text-black outline-none" />
          <span className="h-[18px] w-[25px] bg-[#ff8000]" />
        </div>
      </div>
      <div className="ml-[6px] mr-[5px] mt-px mb-1 h-[22px] shrink-0 border-t-2 border-r-2 border-b-2 border-t-[#666] border-r-white border-b-white bg-[#dedede] px-[2px] pt-px text-[11px] leading-[18px] text-black">Ready</div>
      <svg viewBox="0 0 14 24" className="pointer-events-none absolute top-[74px] left-[80px] h-6 w-[14px]" aria-hidden="true">
        <path d="M1 1V18L5 14.500 8 21.500 11 20 8 13.500H13Z" fill="#fff" stroke="#222" />
      </svg>
      <span className="absolute top-[56px] left-[94px] h-[14px] w-px bg-black" />
    </section>
  );
}

export default function App() {
  return (
    <div className="relative flex h-screen flex-col overflow-hidden bg-[#444] font-[Roboto,sans-serif]">
      <Header />
      <Toolbar />
      <Ribbon />
      <div className="flex min-h-0 flex-1">
        <div className="flex min-w-0 flex-1 flex-col">
          <Viewport />
          <TimeTrack />
        </div>
        <CommandPanel />
      </div>
      <StatusBar />
      <div className="absolute top-[153px] left-[1000px] h-[58px] w-[10px] border-2 border-[#c9c9c9] bg-[#444]">
        <div className="h-[17px] bg-[#c9c9c9]" />
      </div>
      <LayerDialog />
      <NamedSetsDialog />
    </div>
  );
}
